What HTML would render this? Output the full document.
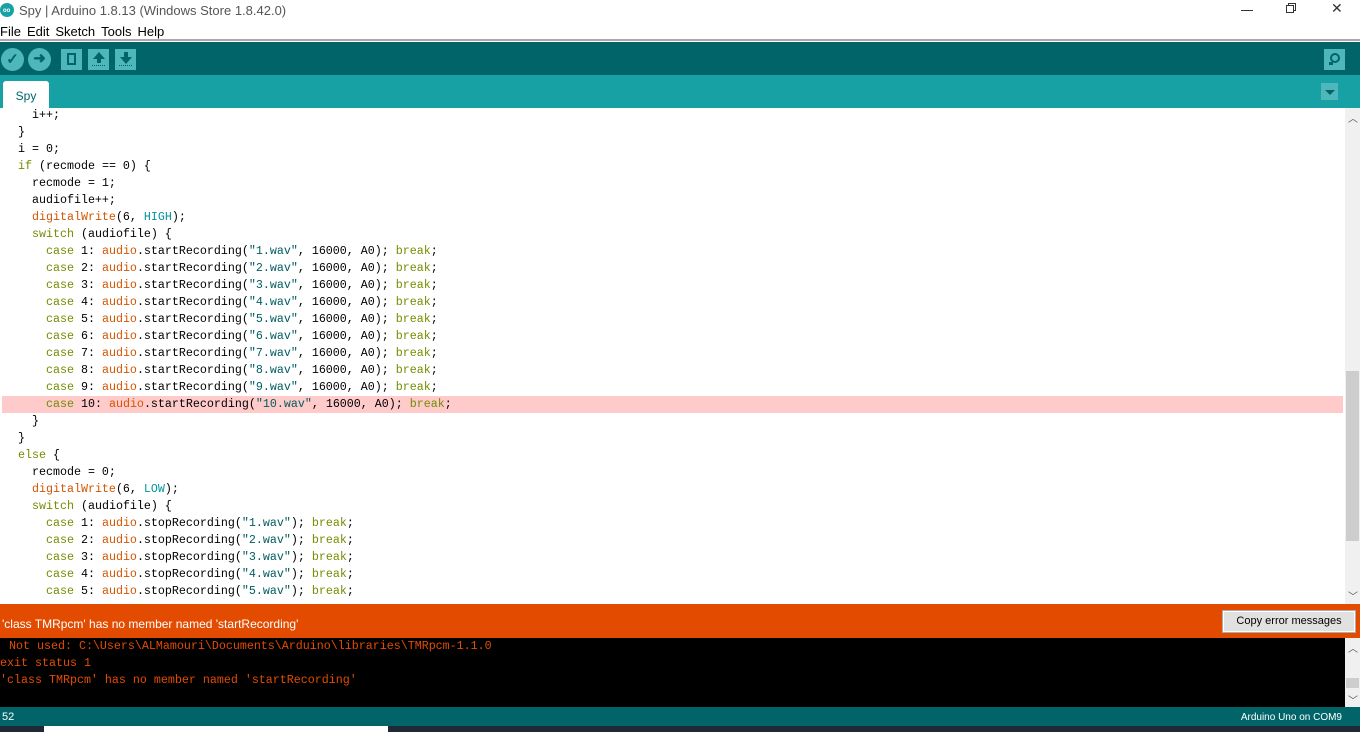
<!DOCTYPE html>
<html><head><meta charset="utf-8"><style>
*{margin:0;padding:0;box-sizing:border-box}
body{width:1360px;height:732px;overflow:hidden;background:#fff;font-family:"Liberation Sans",sans-serif;position:relative}
.abs{position:absolute}
#title{top:0;left:0;width:1360px;height:22px;font-size:13px;color:#777}
#menu{top:22px;left:0;width:1360px;height:19px;font-size:13px;color:#000;border-bottom:2px solid #aaa}
#menu span{margin-right:6px}
#tb{top:42px;left:0;width:1360px;height:33px;background:#006468}
#tabs{top:75px;left:0;width:1360px;height:33px;background:#17a1a5}
#ed{top:108px;left:0;width:1345px;height:496px;overflow:hidden;background:#fff}
.ln{position:absolute;left:4px;height:17px;line-height:17px;font-family:"Liberation Mono",monospace;font-size:11.67px;color:#000;white-space:pre;width:1341px}
.k{color:#728e00}.f{color:#d35400}.c{color:#00979c}.s{color:#005c5f}
#err{top:604px;left:0;width:1360px;height:34px;background:#e34c00}
#con{top:638px;left:0;width:1345px;height:69px;background:#000}
.cl{position:absolute;left:2px;font-family:"Liberation Mono",monospace;font-size:11.67px;color:#e34c00;white-space:pre}
#st{top:707px;left:0;width:1360px;height:19px;background:#006468;color:#fff;font-size:11px}
#task{top:726px;left:0;width:1360px;height:6px;background:#1f2a36}
.btn{position:absolute;top:7px;background:#4db7bb}
</style></head><body>
<div id="title" class="abs">
 <div class="abs" style="left:0;top:3px;width:14px;height:14px;border-radius:50%;background:#17a1a5"></div>
 <div class="abs" style="left:3px;top:8px;font-size:6px;color:#fff;font-weight:bold">oo</div>
 <div class="abs" style="left:19px;top:3px;color:#555">Spy | Arduino 1.8.13 (Windows Store 1.8.42.0)</div>
 <div class="abs" style="left:1241px;top:10px;width:12px;height:1px;background:#333"></div>
 <div class="abs" style="left:1288px;top:3px;width:8px;height:8px;border:1px solid #333"></div>
 <div class="abs" style="left:1286px;top:5px;width:8px;height:8px;border:1px solid #333;background:#fff"></div>
 <div class="abs" style="left:1331px;top:0px;font-size:14px;color:#333;font-weight:lighter">✕</div>
</div>
<div id="menu" class="abs"><div style="padding:2px 0 0 0"><span>File</span><span>Edit</span><span>Sketch</span><span>Tools</span><span>Help</span></div></div>
<div id="tb" class="abs">
 <div class="abs" style="left:1px;top:6px;width:23px;height:23px;border-radius:50%;background:#4db7bb;color:#006468;font-size:15px;text-align:center;line-height:23px;font-weight:bold">✓</div>
 <div class="abs" style="left:28px;top:6px;width:23px;height:23px;border-radius:50%;background:#4db7bb;color:#006468;font-size:15px;text-align:center;line-height:22px;font-weight:bold">➜</div>
 <div class="btn" style="left:61px;width:21px;height:21px"><div class="abs" style="left:6px;top:4px;width:9px;height:12px;border:2px solid #006468"></div></div>
 <div class="btn" style="left:88px;width:21px;height:21px"><div class="abs" style="left:5px;top:3px;border-left:6px solid transparent;border-right:6px solid transparent;border-bottom:7px solid #006468"></div><div class="abs" style="left:9px;top:9px;width:4px;height:5px;background:#006468"></div><div class="abs" style="left:4px;top:16px;width:13px;height:1px;border-top:1px dotted #006468"></div></div>
 <div class="btn" style="left:115px;width:21px;height:21px"><div class="abs" style="left:9px;top:3px;width:4px;height:5px;background:#006468"></div><div class="abs" style="left:5px;top:8px;border-left:6px solid transparent;border-right:6px solid transparent;border-top:7px solid #006468"></div><div class="abs" style="left:4px;top:16px;width:13px;height:1px;border-top:1px dotted #006468"></div></div>
 <div class="btn" style="left:1324px;width:21px;height:21px"><div class="abs" style="left:6px;top:4px;width:10px;height:10px;border:2px solid #006468;border-radius:50%"></div><div class="abs" style="left:5px;top:13px;width:4px;height:3px;background:#006468"></div></div>
</div>
<div id="tabs" class="abs">
 <div class="abs" style="left:3px;top:6px;width:46px;height:27px;background:#fff;border-radius:3px 3px 0 0;color:#006468;font-size:12px;text-align:center;line-height:30px">Spy</div>
 <div class="abs" style="left:1321px;top:8px;width:17px;height:17px;background:#4db7bb"><div class="abs" style="left:4px;top:7px;border-left:5px solid transparent;border-right:5px solid transparent;border-top:5px solid #006468"></div></div>
</div>
<div id="ed" class="abs">
<div class="ln" style="top:-1px">    i++;</div>
<div class="ln" style="top:16px">  }</div>
<div class="ln" style="top:33px">  i = 0;</div>
<div class="ln" style="top:50px">  <span class="k">if</span> (recmode == 0) {</div>
<div class="ln" style="top:67px">    recmode = 1;</div>
<div class="ln" style="top:84px">    audiofile++;</div>
<div class="ln" style="top:101px">    <span class="f">digitalWrite</span>(6, <span class="c">HIGH</span>);</div>
<div class="ln" style="top:118px">    <span class="k">switch</span> (audiofile) {</div>
<div class="ln" style="top:135px">      <span class="k">case</span> 1: <span class="f">audio</span>.startRecording(<span class="s">"1.wav"</span>, 16000, A0); <span class="k">break</span>;</div>
<div class="ln" style="top:152px">      <span class="k">case</span> 2: <span class="f">audio</span>.startRecording(<span class="s">"2.wav"</span>, 16000, A0); <span class="k">break</span>;</div>
<div class="ln" style="top:169px">      <span class="k">case</span> 3: <span class="f">audio</span>.startRecording(<span class="s">"3.wav"</span>, 16000, A0); <span class="k">break</span>;</div>
<div class="ln" style="top:186px">      <span class="k">case</span> 4: <span class="f">audio</span>.startRecording(<span class="s">"4.wav"</span>, 16000, A0); <span class="k">break</span>;</div>
<div class="ln" style="top:203px">      <span class="k">case</span> 5: <span class="f">audio</span>.startRecording(<span class="s">"5.wav"</span>, 16000, A0); <span class="k">break</span>;</div>
<div class="ln" style="top:220px">      <span class="k">case</span> 6: <span class="f">audio</span>.startRecording(<span class="s">"6.wav"</span>, 16000, A0); <span class="k">break</span>;</div>
<div class="ln" style="top:237px">      <span class="k">case</span> 7: <span class="f">audio</span>.startRecording(<span class="s">"7.wav"</span>, 16000, A0); <span class="k">break</span>;</div>
<div class="ln" style="top:254px">      <span class="k">case</span> 8: <span class="f">audio</span>.startRecording(<span class="s">"8.wav"</span>, 16000, A0); <span class="k">break</span>;</div>
<div class="ln" style="top:271px">      <span class="k">case</span> 9: <span class="f">audio</span>.startRecording(<span class="s">"9.wav"</span>, 16000, A0); <span class="k">break</span>;</div>
<div class="ln" style="top:288px;left:2px;padding-left:2px;background:#ffcaca">      <span class="k">case</span> 10: <span class="f">audio</span>.startRecording(<span class="s">"10.wav"</span>, 16000, A0); <span class="k">break</span>;</div>
<div class="ln" style="top:305px">    }</div>
<div class="ln" style="top:322px">  }</div>
<div class="ln" style="top:339px">  <span class="k">else</span> {</div>
<div class="ln" style="top:356px">    recmode = 0;</div>
<div class="ln" style="top:373px">    <span class="f">digitalWrite</span>(6, <span class="c">LOW</span>);</div>
<div class="ln" style="top:390px">    <span class="k">switch</span> (audiofile) {</div>
<div class="ln" style="top:407px">      <span class="k">case</span> 1: <span class="f">audio</span>.stopRecording(<span class="s">"1.wav"</span>); <span class="k">break</span>;</div>
<div class="ln" style="top:424px">      <span class="k">case</span> 2: <span class="f">audio</span>.stopRecording(<span class="s">"2.wav"</span>); <span class="k">break</span>;</div>
<div class="ln" style="top:441px">      <span class="k">case</span> 3: <span class="f">audio</span>.stopRecording(<span class="s">"3.wav"</span>); <span class="k">break</span>;</div>
<div class="ln" style="top:458px">      <span class="k">case</span> 4: <span class="f">audio</span>.stopRecording(<span class="s">"4.wav"</span>); <span class="k">break</span>;</div>
<div class="ln" style="top:475px">      <span class="k">case</span> 5: <span class="f">audio</span>.stopRecording(<span class="s">"5.wav"</span>); <span class="k">break</span>;</div>
</div>
<div class="abs" style="left:1345px;top:108px;width:15px;height:496px;background:#f0f0f0">
 <div class="abs" style="left:3px;top:2px;font-size:10px;color:#555">︿</div>
 <div class="abs" style="left:1px;top:263px;width:13px;height:170px;background:#cdcdcd"></div>
 <div class="abs" style="left:3px;top:480px;font-size:10px;color:#555">﹀</div>
</div>
<div id="err" class="abs">
 <div class="abs" style="left:2px;top:13px;color:#fff;font-size:12px">'class TMRpcm' has no member named 'startRecording'</div>
 <div class="abs" style="left:1222px;top:6px;width:134px;height:23px;background:#e1e1e1;border:1px solid #adadad;outline:1px solid #fff;outline-offset:-2px;font-size:11px;text-align:center;line-height:21px;color:#000">Copy error messages</div>
</div>
<div id="con" class="abs">
 <div class="cl" style="top:1px"> Not used: C:\Users\ALMamouri\Documents\Arduino\libraries\TMRpcm-1.1.0</div>
 <div class="cl" style="top:18px;left:0">exit status 1</div>
 <div class="cl" style="top:35px;left:0">'class TMRpcm' has no member named 'startRecording'</div>
</div>
<div class="abs" style="left:1345px;top:638px;width:15px;height:69px;background:#f0f0f0">
 <div class="abs" style="left:3px;top:2px;font-size:10px;color:#555">︿</div>
 <div class="abs" style="left:1px;top:40px;width:13px;height:10px;background:#cdcdcd"></div>
 <div class="abs" style="left:3px;top:54px;font-size:10px;color:#555">﹀</div>
</div>
<div id="st" class="abs">
 <div class="abs" style="left:2px;top:4px">52</div>
 <div class="abs" style="right:18px;top:5px;font-size:10px">Arduino Uno on COM9</div>
</div>
<div id="task" class="abs"><div class="abs" style="left:44px;top:0;width:344px;height:6px;background:#fff"></div></div>
</body></html>
